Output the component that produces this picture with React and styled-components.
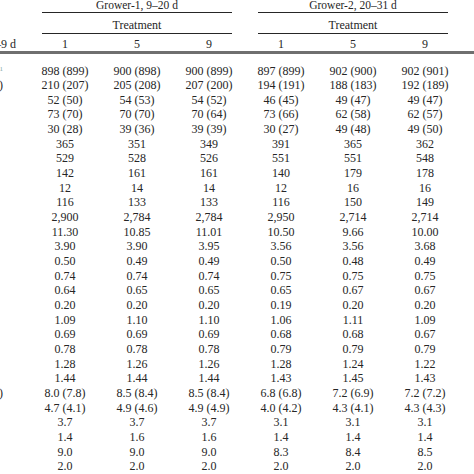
import React from 'react'
import styled, { createGlobalStyle } from 'styled-components'

const GlobalStyle = createGlobalStyle`
  html, body {
    margin: 0;
    padding: 0;
    background: #fff;
    overflow: hidden;
  }
  body {
    font-family: 'Liberation Serif', 'DejaVu Serif', serif;
    color: #262626;
  }
`

const groups = [
  {
    title: 'Grower-1, 9–20 d',
    rows: [
      ['898 (899)', '900 (898)', '900 (899)'],
      ['210 (207)', '205 (208)', '207 (200)'],
      ['52 (50)', '54 (53)', '54 (52)'],
      ['73 (70)', '70 (70)', '70 (64)'],
      ['30 (28)', '39 (36)', '39 (39)'],
      ['365', '351', '349'],
      ['529', '528', '526'],
      ['142', '161', '161'],
      ['12', '14', '14'],
      ['116', '133', '133'],
      ['2,900', '2,784', '2,784'],
      ['11.30', '10.85', '11.01'],
      ['3.90', '3.90', '3.95'],
      ['0.50', '0.49', '0.49'],
      ['0.74', '0.74', '0.74'],
      ['0.64', '0.65', '0.65'],
      ['0.20', '0.20', '0.20'],
      ['1.09', '1.10', '1.10'],
      ['0.69', '0.69', '0.69'],
      ['0.78', '0.78', '0.78'],
      ['1.28', '1.26', '1.26'],
      ['1.44', '1.44', '1.44'],
      ['8.0 (7.8)', '8.5 (8.4)', '8.5 (8.4)'],
      ['4.7 (4.1)', '4.9 (4.6)', '4.9 (4.9)'],
      ['3.7', '3.7', '3.7'],
      ['1.4', '1.6', '1.6'],
      ['9.0', '9.0', '9.0'],
      ['2.0', '2.0', '2.0'],
    ],
  },
  {
    title: 'Grower-2, 20–31 d',
    rows: [
      ['897 (899)', '902 (900)', '902 (901)'],
      ['194 (191)', '188 (183)', '192 (189)'],
      ['46 (45)', '49 (47)', '49 (47)'],
      ['73 (66)', '62 (58)', '62 (57)'],
      ['30 (27)', '49 (48)', '49 (50)'],
      ['391', '365', '362'],
      ['551', '551', '548'],
      ['140', '179', '178'],
      ['12', '16', '16'],
      ['116', '150', '149'],
      ['2,950', '2,714', '2,714'],
      ['10.50', '9.66', '10.00'],
      ['3.56', '3.56', '3.68'],
      ['0.50', '0.48', '0.49'],
      ['0.75', '0.75', '0.75'],
      ['0.65', '0.67', '0.67'],
      ['0.19', '0.20', '0.20'],
      ['1.06', '1.11', '1.09'],
      ['0.68', '0.68', '0.67'],
      ['0.79', '0.79', '0.79'],
      ['1.28', '1.24', '1.22'],
      ['1.43', '1.45', '1.43'],
      ['6.8 (6.8)', '7.2 (6.9)', '7.2 (7.2)'],
      ['4.0 (4.2)', '4.3 (4.1)', '4.3 (4.3)'],
      ['3.1', '3.1', '3.1'],
      ['1.4', '1.4', '1.4'],
      ['8.3', '8.4', '8.5'],
      ['2.0', '2.0', '2.0'],
    ],
  },
]

// only the tail of each row label shows at the left edge
const labels = {
  0: { text: 'Dry matter', note: '1' },
  1: { text: 'Crude protein (N × 6.25)' },
  22: { text: 'Calcium (total)' },
}

const treatments = ['1', '5', '9']

const Page = styled.div`
  width: 474px;
  height: 474px;
  overflow: hidden;
`

const Table = styled.div`
  display: grid;
  grid-template-columns: 60px repeat(6, 72px) 60px;
  margin-left: -31px;
  margin-top: -2px;
  font-size: 12px;
`

const GroupHead = styled.div`
  grid-column: ${(p) => p.col} / span 3;
  display: flex;
  flex-direction: column;
  text-align: center;
  padding-top: ${(p) => p.pad}px;
  line-height: 14px;
  font-size: ${(p) => p.size || 12}px;
  &::after {
    content: '';
    display: block;
    height: 1px;
    margin: ${(p) => p.gap}px 13px 0;
    background: #262626;
  }
`

const Spacer = styled.div`
  grid-column: ${(p) => p.col} / span 1;
`

const HeadCell = styled.div`
  display: flex;
  justify-content: ${(p) => (p.label ? 'flex-end' : 'center')};
  overflow: hidden;
  padding: 3px ${(p) => (p.label ? 13 : 0)}px 0 0;
  line-height: 14px;
  height: 14px;
  white-space: nowrap;
`

const Rule = styled.div`
  grid-column: 1 / -1;
  height: 2.5px;
  background: #6f6f6f;
  margin-bottom: 10px;
`

const Label = styled.div`
  display: flex;
  justify-content: flex-end;
  align-items: baseline;
  padding-right: ${(p) => p.pad}px;
  line-height: 14.67px;
  height: 14.67px;
  white-space: nowrap;
  overflow: hidden;
`

const Note = styled.span`
  font-size: 7px;
  line-height: 7px;
  color: #7fa7a0;
  margin-left: 1px;
  position: relative;
  top: -4px;
`

const Cell = styled.div`
  text-align: center;
  line-height: 14.67px;
  height: 14.67px;
  white-space: nowrap;
`

const App = () => {
  const rowCount = groups[0].rows.length
  return (
    <Page>
      <GlobalStyle />
      <Table>
        <Spacer col={1} />
        {groups.map((g, i) => (
          <GroupHead key={g.title} col={2 + i * 3} pad={0} gap={0} size={11.5}>
            {g.title}
          </GroupHead>
        ))}
        <Spacer col={8} />

        <Spacer col={1} />
        {groups.map((g, i) => (
          <GroupHead key={g.title + 't'} col={2 + i * 3} pad={5} gap={1}>
            Treatment
          </GroupHead>
        ))}
        <Spacer col={8} />

        <HeadCell label>Starter, 1–9 d</HeadCell>
        {groups.map((g) =>
          treatments.map((t) => <HeadCell key={g.title + t}>{t}</HeadCell>)
        )}
        <Spacer col={8} />
        <Rule />

        {Array.from({ length: rowCount }).map((_, r) => {
          const lab = labels[r]
          return (
            <React.Fragment key={r}>
              <Label pad={lab && lab.note ? 26 : 26}>
                {lab ? lab.text : ''}
                {lab && lab.note && <Note>{lab.note}</Note>}
              </Label>
              {groups.map((g) =>
                g.rows[r].map((v, c) => (
                  <Cell key={g.title + c}>{v}</Cell>
                ))
              )}
              <Spacer col={8} />
            </React.Fragment>
          )
        })}
      </Table>
    </Page>
  )
}

export default App
